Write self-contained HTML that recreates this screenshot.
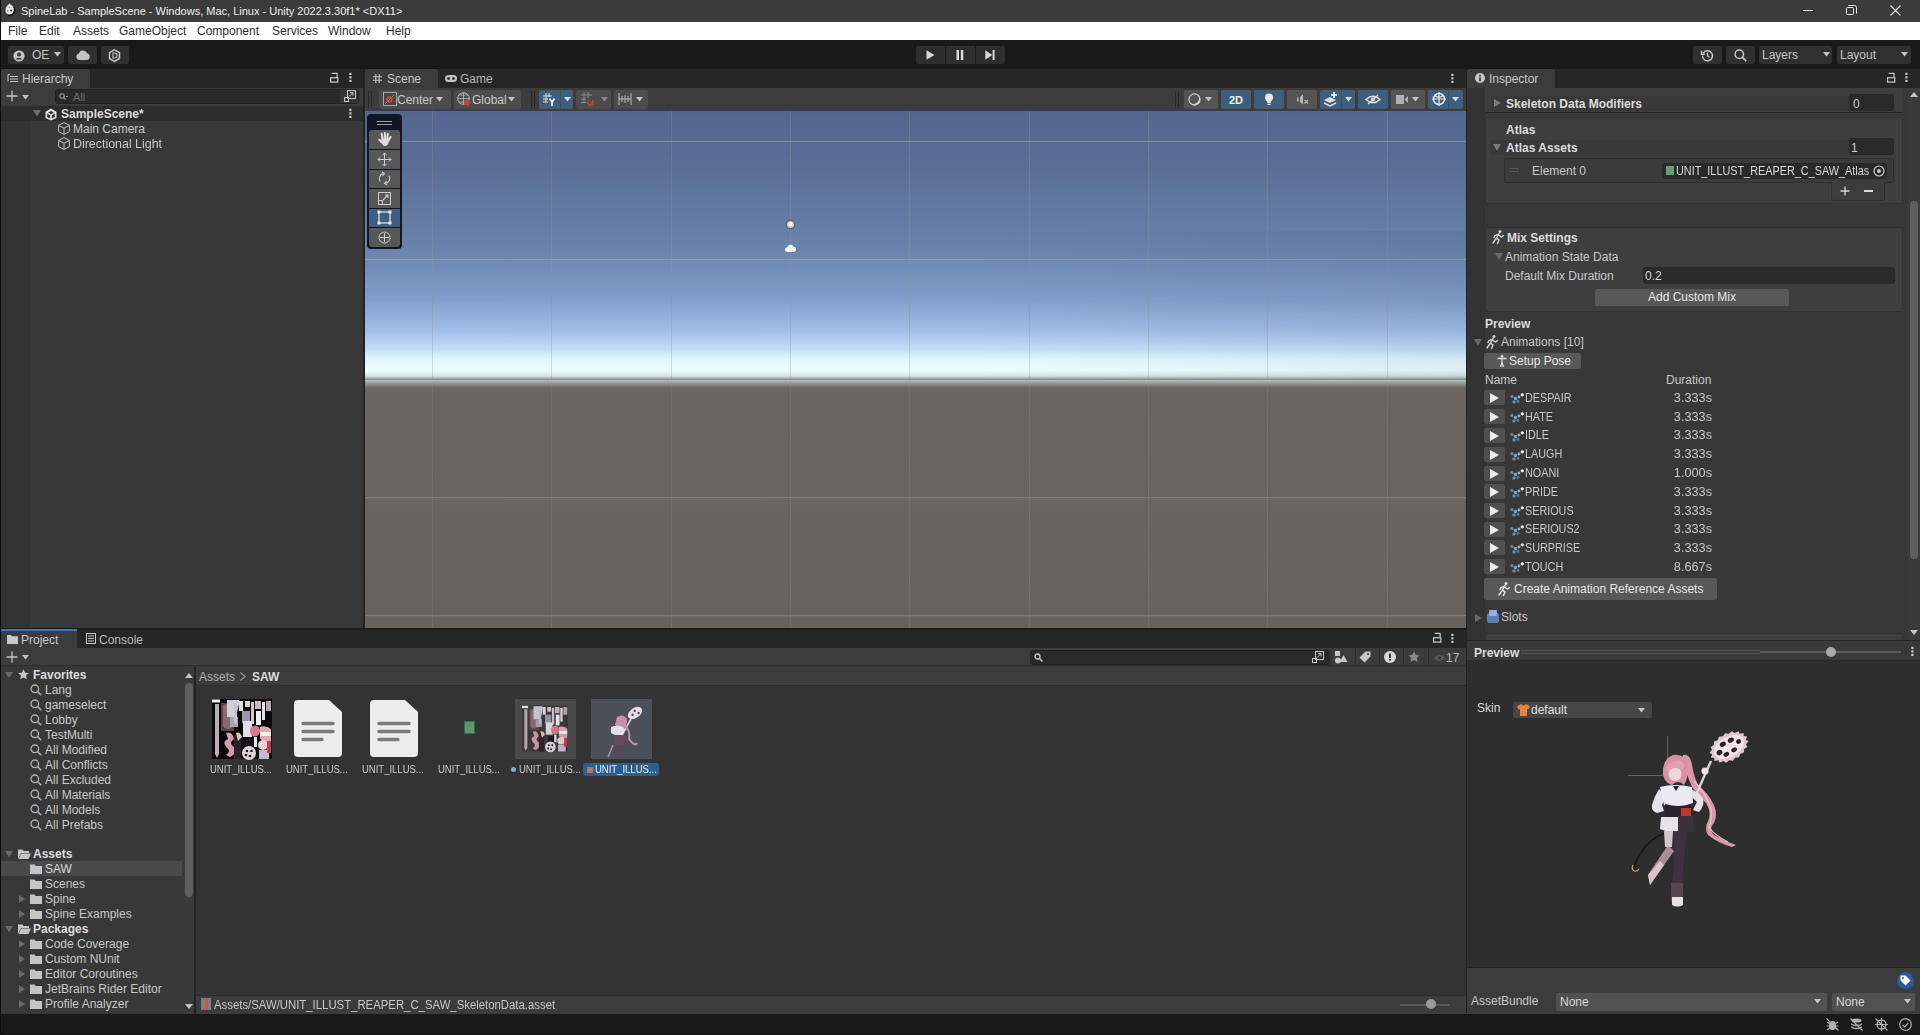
<!DOCTYPE html>
<html><head><meta charset="utf-8">
<style>
*{box-sizing:border-box;margin:0;padding:0}
html,body{width:1920px;height:1035px;overflow:hidden;background:#383838}
body{position:relative;font-family:"Liberation Sans",sans-serif;font-size:12px;color:#d2d2d2}
.a{position:absolute}
.t{position:absolute;white-space:nowrap;line-height:14px}
svg{position:absolute;overflow:visible}
/* title */
#title{left:0;top:0;width:1920px;height:22px;background:#3b3b3b}
#menu{left:0;top:22px;width:1920px;height:18px;background:#fff}
#menu .t{color:#2e2e2e;top:2px;font-size:12px}
#tb{left:0;top:40px;width:1920px;height:29px;background:#191919}
.tbb{position:absolute;top:6px;height:18px;background:#303030;border-radius:2px}
.tab{position:absolute;background:#3c3c3c;border-radius:3px 3px 0 0}
.tabbar{position:absolute;background:#262626}
.btn{position:absolute;background:#4c4c4c;border-radius:2px}
.blue{background:#3f5e7e}
</style></head><body>

<!-- ===== TITLE BAR ===== -->
<div id="title" class="a">
  <svg style="left:4px;top:3px" width="13" height="13" viewBox="0 0 13 13"><path d="M5.5 0.5L9 3.5Q10.5 6 9.5 9Q8 11.5 5.5 11.5Q2.5 11.5 1.5 8.5Q1 5 3 3z" fill="#e8e8e8"/><path d="M10 4Q12 8 9 11Q6.5 13 4 12.5" fill="none" stroke="#101010" stroke-width="1.3"/><circle cx="5.5" cy="4.5" r="0.8" fill="#888"/><circle cx="3.8" cy="7.6" r="0.9" fill="#888"/><circle cx="7.2" cy="7.6" r="1" fill="#222"/></svg>
  <div class="t" style="left:21px;top:4px;color:#f0f0f0;font-size:11px">SpineLab - SampleScene - Windows, Mac, Linux - Unity 2022.3.30f1* &lt;DX11&gt;</div>
  <div class="a" style="left:1803px;top:10px;width:10px;height:1px;background:#e8e8e8"></div>
  <svg style="left:1846px;top:5px" width="11" height="11" viewBox="0 0 11 11"><rect x="0.5" y="2.5" width="7" height="7" rx="1" fill="none" stroke="#e8e8e8"/><path d="M2.5 0.5h6a2 2 0 0 1 2 2v6" fill="none" stroke="#e8e8e8"/></svg>
  <svg style="left:1890px;top:5px" width="11" height="11" viewBox="0 0 11 11"><path d="M0.5 0.5L10.5 10.5M10.5 0.5L0.5 10.5" stroke="#e8e8e8" stroke-width="1.1"/></svg>
</div>

<!-- ===== MENU ===== -->
<div id="menu" class="a">
  <div class="t" style="left:8px">File</div>
  <div class="t" style="left:39px">Edit</div>
  <div class="t" style="left:73px">Assets</div>
  <div class="t" style="left:119px">GameObject</div>
  <div class="t" style="left:197px">Component</div>
  <div class="t" style="left:272px">Services</div>
  <div class="t" style="left:328px">Window</div>
  <div class="t" style="left:386px">Help</div>
</div>

<!-- ===== MAIN TOOLBAR ===== -->
<div id="tb" class="a">
  <div class="tbb" style="left:8px;width:56px"></div>
  <svg style="left:13px;top:10px" width="12" height="12" viewBox="0 0 12 12"><circle cx="6" cy="6" r="5.6" fill="#c4c4c4"/><circle cx="6" cy="4.4" r="2" fill="#383838"/><path d="M2.6 9.6a3.6 2.6 0 0 1 6.8 0" fill="#383838"/></svg>
  <div class="t" style="left:32px;top:8px;color:#c4c4c4">OE</div>
  <svg style="left:54px;top:12px" width="7" height="5" viewBox="0 0 7 5"><path d="M0 0h7L3.5 4.5z" fill="#c4c4c4"/></svg>
  <div class="tbb" style="left:68px;width:29px"></div>
  <svg style="left:76px;top:10px" width="14" height="10" viewBox="0 0 14 10"><path d="M3.5 10a3.3 3.3 0 0 1-.6-6.5A4.3 4.3 0 0 1 11 3.3 3.4 3.4 0 0 1 10.8 10z" fill="#c4c4c4"/></svg>
  <div class="tbb" style="left:101px;width:28px"></div>
  <svg style="left:108px;top:9px" width="13" height="13" viewBox="0 0 13 13"><path d="M6.5 0.8l5 2.9v5.8l-5 2.9-5-2.9V3.7z" fill="none" stroke="#c4c4c4" stroke-width="1.5"/><path d="M5 4h1.6a2.5 2.5 0 0 1 0 5H5z" fill="none" stroke="#c4c4c4" stroke-width="1.1"/></svg>
  <div class="tbb" style="left:916px;width:89px;background:#2e2e2e"></div>
  <div class="a" style="left:945px;top:6px;width:1px;height:18px;background:#1c1c1c"></div>
  <div class="a" style="left:975px;top:6px;width:1px;height:18px;background:#1c1c1c"></div>
  <svg style="left:926px;top:10px" width="9" height="10" viewBox="0 0 9 10"><path d="M0.5 0.3L8.5 5 0.5 9.7z" fill="#d8d8d8"/></svg>
  <svg style="left:956px;top:10px" width="8" height="10" viewBox="0 0 8 10"><rect x="0.5" y="0" width="2.5" height="10" rx="0.5" fill="#d8d8d8"/><rect x="4.8" y="0" width="2.5" height="10" rx="0.5" fill="#d8d8d8"/></svg>
  <svg style="left:985px;top:10px" width="10" height="10" viewBox="0 0 10 10"><path d="M0.3 0.3L7.3 5 0.3 9.7z" fill="#d8d8d8"/><rect x="7.6" y="0" width="2" height="10" fill="#d8d8d8"/></svg>
  <div class="tbb" style="left:1693px;width:29px"></div>
  <svg style="left:1701px;top:9px" width="13" height="13" viewBox="0 0 13 13"><path d="M2.2 4.2A5 5 0 1 1 1.5 6.5" fill="none" stroke="#c4c4c4" stroke-width="1.5"/><path d="M0.5 1.8v3.5H4" fill="none" stroke="#c4c4c4" stroke-width="1.4"/><path d="M6.5 3.5v3.3l2 1.4" fill="none" stroke="#c4c4c4" stroke-width="1.4"/></svg>
  <div class="tbb" style="left:1726px;width:29px"></div>
  <svg style="left:1734px;top:9px" width="13" height="13" viewBox="0 0 13 13"><circle cx="5.3" cy="5.3" r="4.2" fill="none" stroke="#c4c4c4" stroke-width="1.5"/><path d="M8.4 8.4l3.8 3.8" stroke="#c4c4c4" stroke-width="1.8"/></svg>
  <div class="tbb" style="left:1759px;width:73px"></div>
  <div class="t" style="left:1762px;top:8px;color:#c4c4c4">Layers</div>
  <svg style="left:1823px;top:12px" width="7" height="5" viewBox="0 0 7 5"><path d="M0 0h7L3.5 4.5z" fill="#c4c4c4"/></svg>
  <div class="tbb" style="left:1837px;width:74px"></div>
  <div class="t" style="left:1840px;top:8px;color:#c4c4c4">Layout</div>
  <svg style="left:1901px;top:12px" width="7" height="5" viewBox="0 0 7 5"><path d="M0 0h7L3.5 4.5z" fill="#c4c4c4"/></svg>
</div>

<!-- ===== HIERARCHY ===== -->
<div class="tabbar" style="left:0;top:69px;width:363px;height:19px"></div>
<div class="tab" style="left:0;top:69px;width:90px;height:19px"></div>
<svg style="left:7px;top:74px" width="11" height="9" viewBox="0 0 11 9"><path d="M1 0.5h2M3 2.5h8M3 5h8M3 7.5h8M1 0.5v7" stroke="#c4c4c4" stroke-width="1"/></svg>
<div class="t" style="left:22px;top:72px;color:#c8c8c8">Hierarchy</div>
<svg style="left:329px;top:72px" width="10" height="11" viewBox="0 0 10 11"><path d="M2.8 1.3H8.1V5.6" fill="none" stroke="#c8c8c8" stroke-width="1.2"/><rect x="1.6" y="5.7" width="7.2" height="4.4" fill="none" stroke="#c8c8c8" stroke-width="1.2"/></svg>
<svg style="left:349px;top:72px" width="3" height="11" viewBox="0 0 3 11"><rect x="0.3" y="0.8" width="2.2" height="2.2" fill="#c8c8c8"/><rect x="0.3" y="4.3" width="2.2" height="2.2" fill="#c8c8c8"/><rect x="0.3" y="7.8" width="2.2" height="2.2" fill="#c8c8c8"/></svg>
<div class="a" style="left:0;top:88px;width:363px;height:539px;background:#383838"></div>
<div class="a" style="left:0;top:88px;width:363px;height:17px;background:#3c3c3c"></div>
<svg style="left:6px;top:90px" width="12" height="12" viewBox="0 0 12 12"><path d="M6 0.5v11M0.5 6h11" stroke="#c4c4c4" stroke-width="1.3"/></svg>
<svg style="left:22px;top:95px" width="7" height="5" viewBox="0 0 7 5"><path d="M0 0h7L3.5 4.5z" fill="#c4c4c4"/></svg>
<div class="a" style="left:55px;top:89px;width:304px;height:15px;background:#2a2a2a;border:1px solid #212121;border-radius:3px"></div>
<svg style="left:59px;top:93px" width="9" height="8" viewBox="0 0 9 8"><circle cx="3" cy="3" r="2.2" fill="none" stroke="#9a9a9a" stroke-width="1.1"/><path d="M4.5 4.5l2 2M7 3.5h2" stroke="#9a9a9a" stroke-width="1.1"/></svg>
<div class="t" style="left:73px;top:90px;color:#6e6e6e;font-size:11px">All</div>
<div class="a" style="left:340px;top:90px;width:18px;height:13px;background:#353535"></div>
<svg style="left:344px;top:90px" width="12" height="12" viewBox="0 0 12 12"><rect x="3.5" y="0.5" width="8" height="8" fill="none" stroke="#c4c4c4"/><rect x="0.5" y="7.5" width="4" height="4" fill="none" stroke="#c4c4c4"/><path d="M5 6.5L9 2.5M6 2.5h3v3" fill="none" stroke="#c4c4c4"/></svg>
<div class="a" style="left:1px;top:121px;width:29px;height:506px;background:#333333"></div>
<div class="a" style="left:0;top:88px;width:1px;height:540px;background:#232323"></div>
<div class="a" style="left:0;top:106px;width:363px;height:15px;background:#2d2d2d"></div>
<svg style="left:33px;top:110px" width="8" height="7" viewBox="0 0 8 7"><path d="M0 0h8L4 6.5z" fill="#6e6e6e"/></svg>
<svg style="left:45px;top:108px" width="12" height="13" viewBox="0 0 12 13"><path d="M6 0.5l5.5 3.2v6.2L6 12.6 0.5 9.9V3.7z" fill="#e0e0e0"/><path d="M3.2 4.6L6 6.2 8.8 4.6 6 3zM2.2 5.6v3.3l2.9 1.6V7.2zM9.8 5.6v3.3L6.9 10.5V7.2z" fill="#2d2d2d"/></svg>
<div class="t" style="left:61px;top:107px;color:#dcdcdc;font-weight:bold">SampleScene*</div>
<svg style="left:349px;top:108px" width="3" height="11" viewBox="0 0 3 11"><rect x="0.3" y="0.8" width="2.2" height="2.2" fill="#c8c8c8"/><rect x="0.3" y="4.3" width="2.2" height="2.2" fill="#c8c8c8"/><rect x="0.3" y="7.8" width="2.2" height="2.2" fill="#c8c8c8"/></svg>
<svg style="left:58px;top:122px" width="12" height="13" viewBox="0 0 12 13"><path d="M6 0.6l5.4 2.8v6.2L6 12.4 0.6 9.6V3.4zM0.6 3.4L6 6.2l5.4-2.8M6 6.2v6.2" fill="none" stroke="#bdbdbd" stroke-width="1"/></svg>
<div class="t" style="left:73px;top:122px;color:#c8c8c8">Main Camera</div>
<svg style="left:58px;top:137px" width="12" height="13" viewBox="0 0 12 13"><path d="M6 0.6l5.4 2.8v6.2L6 12.4 0.6 9.6V3.4zM0.6 3.4L6 6.2l5.4-2.8M6 6.2v6.2" fill="none" stroke="#bdbdbd" stroke-width="1"/></svg>
<div class="t" style="left:73px;top:137px;color:#c8c8c8;transform:scaleX(1.035);transform-origin:0 0">Directional Light</div>
<div class="a" style="left:363px;top:69px;width:2px;height:560px;background:#232323"></div>

<!-- ===== SCENE ===== -->
<div class="tabbar" style="left:365px;top:69px;width:1101px;height:19px"></div>
<div class="tab" style="left:365px;top:69px;width:73px;height:19px"></div>
<svg style="left:373px;top:74px" width="9" height="9" viewBox="0 0 9 9"><path d="M2.8 0v9M6.2 0v9M0 2.8h9M0 6.2h9" stroke="#c4c4c4" stroke-width="1.1"/></svg>
<div class="t" style="left:387px;top:72px;color:#c8c8c8">Scene</div>
<svg style="left:445px;top:75px" width="12" height="7" viewBox="0 0 12 7"><rect x="0" y="0" width="12" height="7" rx="3.5" fill="#c4c4c4"/><circle cx="3.5" cy="3.5" r="1.4" fill="#282828"/><circle cx="8.5" cy="3.5" r="1.4" fill="#282828"/></svg>
<div class="t" style="left:460px;top:72px;color:#b8b8b8">Game</div>
<svg style="left:1451px;top:73px" width="3" height="11" viewBox="0 0 3 11"><rect x="0.3" y="0.8" width="2.2" height="2.2" fill="#c8c8c8"/><rect x="0.3" y="4.3" width="2.2" height="2.2" fill="#c8c8c8"/><rect x="0.3" y="7.8" width="2.2" height="2.2" fill="#c8c8c8"/></svg>
<div class="a" style="left:365px;top:88px;width:1101px;height:23px;background:#3c3c3c"></div>
<div class="a" style="left:368px;top:91px;width:1px;height:17px;background:#2a2a2a"></div><div class="a" style="left:371px;top:91px;width:1px;height:17px;background:#2a2a2a"></div>
<div class="btn" style="left:379px;top:90px;width:72px;height:19px"></div>
<svg style="left:383px;top:92px" width="14" height="14" viewBox="0 0 14 14"><rect x="0.5" y="0.5" width="13" height="13" fill="#4a4646" stroke="#a8a8a8"/><path d="M2.5 11.5L11.5 2.5" stroke="#a89090" stroke-width="1"/><circle cx="6.5" cy="7.5" r="2.4" fill="none" stroke="#d04636" stroke-width="1.6"/></svg>
<div class="t" style="left:397px;top:93px;color:#c8c8c8">Center</div>
<svg style="left:436px;top:97px" width="7" height="5" viewBox="0 0 7 5"><path d="M0 0h7L3.5 4.5z" fill="#c4c4c4"/></svg>
<div class="btn" style="left:454px;top:90px;width:67px;height:19px"></div>
<svg style="left:457px;top:92px" width="14" height="14" viewBox="0 0 14 14"><circle cx="6.5" cy="6.5" r="5.8" fill="none" stroke="#b8b8b8" stroke-width="1"/><path d="M0.7 6.5h11.6M6.5 0.7v11.6M2 3h9M2 10h9" stroke="#b8b8b8" stroke-width="0.8"/><circle cx="10" cy="10.5" r="3" fill="#c8442c"/></svg>
<div class="t" style="left:472px;top:93px;color:#c8c8c8">Global</div>
<svg style="left:508px;top:97px" width="7" height="5" viewBox="0 0 7 5"><path d="M0 0h7L3.5 4.5z" fill="#c4c4c4"/></svg>
<div class="a" style="left:531px;top:91px;width:1px;height:17px;background:#2a2a2a"></div><div class="a" style="left:534px;top:91px;width:1px;height:17px;background:#2a2a2a"></div>
<div class="btn blue" style="left:539px;top:90px;width:34px;height:19px"></div>
<div class="a" style="left:560px;top:90px;width:1px;height:19px;background:#3a5068"></div>
<svg style="left:543px;top:93px" width="13" height="13" viewBox="0 0 13 13"><path d="M3 0v9M6 0v4M0 3h9M0 6h5M0 9h5" stroke="#e0e0e0" stroke-width="1"/><path d="M6.5 5.5l2.5 3.5 2.5-3.5M9 9v4" stroke="#ffffff" stroke-width="1.6" fill="none"/></svg>
<svg style="left:564px;top:97px" width="7" height="5" viewBox="0 0 7 5"><path d="M0 0h7L3.5 4.5z" fill="#d8d8d8"/></svg>
<div class="btn" style="left:576px;top:90px;width:35px;height:19px"></div>
<svg style="left:581px;top:92px" width="14" height="14" viewBox="0 0 14 14"><path d="M3 0v11M7 0v6M0 3h11M0 7h5M0 10.5h5" stroke="#909090" stroke-width="0.9"/><path d="M7 9.5a2.5 2.5 0 1 0 4 -1" stroke="#c8442c" stroke-width="1.8" fill="none"/></svg>
<svg style="left:601px;top:97px" width="7" height="5" viewBox="0 0 7 5"><path d="M0 0h7L3.5 4.5z" fill="#8a8a8a"/></svg>
<div class="btn" style="left:614px;top:90px;width:34px;height:19px"></div>
<svg style="left:618px;top:93px" width="14" height="12" viewBox="0 0 14 12"><path d="M1 0v12M13 0v12M1 6h12M4 3v6M7 2v8M10 3v6" stroke="#b8b8b8" stroke-width="1"/></svg>
<svg style="left:636px;top:97px" width="7" height="5" viewBox="0 0 7 5"><path d="M0 0h7L3.5 4.5z" fill="#c4c4c4"/></svg>
<div class="a" style="left:1175px;top:91px;width:1px;height:17px;background:#2a2a2a"></div><div class="a" style="left:1178px;top:91px;width:1px;height:17px;background:#2a2a2a"></div>
<div class="btn" style="left:1184px;top:90px;width:34px;height:19px;background:#545454"></div>
<svg style="left:1188px;top:93px" width="13" height="13" viewBox="0 0 13 13"><circle cx="6.5" cy="6.5" r="5.6" fill="none" stroke="#d0d0d0" stroke-width="1.1"/><path d="M10.5 2.5A5.6 5.6 0 0 1 2.5 10.5Q7 12 9.5 9Q12 6 10.5 2.5z" fill="#d0d0d0"/></svg>
<svg style="left:1205px;top:97px" width="7" height="5" viewBox="0 0 7 5"><path d="M0 0h7L3.5 4.5z" fill="#c4c4c4"/></svg>
<div class="btn blue" style="left:1221px;top:90px;width:30px;height:19px"></div>
<div class="t" style="left:1229px;top:93px;color:#f0f0f0;font-size:11px;font-weight:bold">2D</div>
<div class="btn blue" style="left:1254px;top:90px;width:30px;height:19px"></div>
<svg style="left:1264px;top:93px" width="10" height="13" viewBox="0 0 10 13"><circle cx="5" cy="4.5" r="4" fill="#e8e8e8"/><rect x="3.2" y="7" width="3.6" height="3" fill="#e8e8e8"/><rect x="3.5" y="10.6" width="3" height="1.4" fill="#e8e8e8"/></svg>
<div class="btn" style="left:1287px;top:90px;width:30px;height:19px;background:#545454"></div>
<svg style="left:1297px;top:94px" width="12" height="11" viewBox="0 0 12 11"><path d="M0 3.5h1.5v4H0z" fill="#b8b8b8"/><path d="M3 3l3-2.5v10L3 8z" fill="#b8b8b8"/><path d="M7.5 6l3.5 3.5M11 6l-3.5 3.5" stroke="#b8b8b8" stroke-width="1.1"/></svg>
<div class="btn blue" style="left:1320px;top:90px;width:35px;height:19px"></div>
<div class="a" style="left:1341px;top:90px;width:1px;height:19px;background:#3a5068"></div>
<svg style="left:1324px;top:92px" width="14" height="14" viewBox="0 0 14 14"><path d="M0 8l6-3 6 3-6 3z" fill="#e0e0e0"/><path d="M0 11l6 3 6-3" fill="none" stroke="#e0e0e0" stroke-width="1.4"/><path d="M10 0v6M7 3h6" stroke="#ffffff" stroke-width="1.6"/></svg>
<svg style="left:1345px;top:97px" width="7" height="5" viewBox="0 0 7 5"><path d="M0 0h7L3.5 4.5z" fill="#d8d8d8"/></svg>
<div class="btn blue" style="left:1358px;top:90px;width:30px;height:19px"></div>
<svg style="left:1365px;top:94px" width="16" height="11" viewBox="0 0 16 11"><path d="M1 5.5Q8 -1 15 5.5Q8 12 1 5.5z" fill="none" stroke="#e0e0e0" stroke-width="1.4"/><circle cx="8" cy="5.5" r="2" fill="#e0e0e0"/><path d="M3 10L13 1" stroke="#e0e0e0" stroke-width="1.4"/></svg>
<div class="btn" style="left:1391px;top:90px;width:34px;height:19px;background:#545454"></div>
<svg style="left:1396px;top:95px" width="12" height="9" viewBox="0 0 12 9"><rect x="0" y="0" width="8" height="9" fill="#b0b0b0"/><path d="M8.5 4.5L12 1v7z" fill="#b0b0b0"/></svg>
<svg style="left:1412px;top:97px" width="7" height="5" viewBox="0 0 7 5"><path d="M0 0h7L3.5 4.5z" fill="#c4c4c4"/></svg>
<div class="btn blue" style="left:1428px;top:90px;width:35px;height:19px"></div>
<div class="a" style="left:1448px;top:90px;width:1px;height:19px;background:#3a5068"></div>
<svg style="left:1432px;top:92px" width="14" height="14" viewBox="0 0 14 14"><circle cx="7" cy="7" r="5.5" fill="none" stroke="#e8e8e8" stroke-width="1.5"/><path d="M7 0v14M0 7h14M3 3.5Q7 7 11 3.5" fill="none" stroke="#e8e8e8" stroke-width="1.2"/></svg>
<svg style="left:1452px;top:97px" width="7" height="5" viewBox="0 0 7 5"><path d="M0 0h7L3.5 4.5z" fill="#d8d8d8"/></svg>
<div id="scene" class="a" style="left:365px;top:111px;width:1101px;height:517px;overflow:hidden;background:linear-gradient(#526690 0px,#5a6f96 60px,#6a84ad 140px,#819fcc 189px,#9fbde6 219px,#c4e0f8 239px,#e2f6ff 248px,#f0fcff 259px,#d8e4e6 265px,#a0acac 267.5px,#889494 268.5px,#b4bcbc 269.5px,#8c8e8e 273px,#6a6562 277px,#68625d 517px)">
<div class="a" style="left:0;top:30px;width:1101px;height:1px;background:rgba(165,170,175,0.33)"></div><div class="a" style="left:0;top:148px;width:1101px;height:1px;background:rgba(165,170,175,0.33)"></div><div class="a" style="left:0;top:386px;width:1101px;height:1px;background:rgba(165,170,175,0.33)"></div><div class="a" style="left:0;top:504px;width:1101px;height:1px;background:rgba(165,170,175,0.33)"></div>
<div class="a" style="left:67px;top:0;width:1px;height:268px;background:rgba(145,148,150,0.33)"></div><div class="a" style="left:67px;top:270px;width:1px;height:247px;background:rgba(150,150,150,0.2)"></div><div class="a" style="left:186px;top:0;width:1px;height:268px;background:rgba(145,148,150,0.33)"></div><div class="a" style="left:186px;top:270px;width:1px;height:247px;background:rgba(150,150,150,0.2)"></div><div class="a" style="left:306px;top:0;width:1px;height:268px;background:rgba(145,148,150,0.33)"></div><div class="a" style="left:306px;top:270px;width:1px;height:247px;background:rgba(150,150,150,0.2)"></div><div class="a" style="left:425px;top:0;width:1px;height:268px;background:rgba(145,148,150,0.33)"></div><div class="a" style="left:425px;top:270px;width:1px;height:247px;background:rgba(150,150,150,0.2)"></div><div class="a" style="left:544px;top:0;width:1px;height:268px;background:rgba(145,148,150,0.33)"></div><div class="a" style="left:544px;top:270px;width:1px;height:247px;background:rgba(150,150,150,0.2)"></div><div class="a" style="left:664px;top:0;width:1px;height:268px;background:rgba(145,148,150,0.33)"></div><div class="a" style="left:664px;top:270px;width:1px;height:247px;background:rgba(150,150,150,0.2)"></div><div class="a" style="left:783px;top:0;width:1px;height:268px;background:rgba(145,148,150,0.33)"></div><div class="a" style="left:783px;top:270px;width:1px;height:247px;background:rgba(150,150,150,0.2)"></div><div class="a" style="left:902px;top:0;width:1px;height:268px;background:rgba(145,148,150,0.33)"></div><div class="a" style="left:902px;top:270px;width:1px;height:247px;background:rgba(150,150,150,0.2)"></div><div class="a" style="left:1022px;top:0;width:1px;height:268px;background:rgba(145,148,150,0.33)"></div><div class="a" style="left:1022px;top:270px;width:1px;height:247px;background:rgba(150,150,150,0.2)"></div><div class="a" style="left:0;top:30px;width:1101px;height:1px;background:rgba(165,170,175,0.33)"></div><div class="a" style="left:0;top:148px;width:1101px;height:1px;background:rgba(165,170,175,0.33)"></div><div class="a" style="left:0;top:387px;width:1101px;height:2px;background:rgba(140,140,135,0.13)"></div><div class="a" style="left:0;top:504px;width:1101px;height:2px;background:rgba(140,140,135,0.13)"></div>
<div class="a" style="left:0;top:120px;width:1101px;height:149px;background:linear-gradient(to right,rgba(30,50,70,0) 55%,rgba(30,50,70,0.07) 100%)"></div>
<div class="a" style="left:2px;top:3px;width:35px;height:135px;background:#101722;border-radius:4px"></div>
<div class="a" style="left:12px;top:10px;width:15px;height:1px;background:#9aa0a8"></div><div class="a" style="left:12px;top:13px;width:15px;height:1px;background:#9aa0a8"></div>
<div class="a" style="left:4px;top:19px;width:31px;height:19px;background:#575757;border-radius:3px 3px 0 0"></div>
<div class="a" style="left:4px;top:39px;width:31px;height:19px;background:#575757"></div>
<div class="a" style="left:4px;top:59px;width:31px;height:18px;background:#575757"></div>
<div class="a" style="left:4px;top:78px;width:31px;height:19px;background:#575757"></div>
<div class="a" style="left:4px;top:98px;width:31px;height:18px;background:#3d5e80"></div>
<div class="a" style="left:4px;top:117px;width:31px;height:19px;background:#575757;border-radius:0 0 3px 3px"></div>
<svg style="left:13px;top:21px" width="14" height="15" viewBox="0 0 14 15"><g stroke="#dcdcdc" stroke-linecap="round" fill="none"><path d="M3.6 1.8L4.6 7M6.8 1L7 7M9.8 1.8L9.2 7M12.6 4.8L10.6 8.5" stroke-width="2.1"/><path d="M1.3 7.8L4 10.5" stroke-width="2.2"/></g><path d="M3.4 6.5H11L10.5 11Q9.5 14 7 14Q4.8 14 4 11.5z" fill="#dcdcdc"/></svg>
<svg style="left:12px;top:41px" width="15" height="15" viewBox="0 0 15 15"><path d="M7.5 1v13M1 7.5h13M5.5 3l2-2 2 2M5.5 12l2 2 2-2M3 5.5l-2 2 2 2M12 5.5l2 2-2 2" fill="none" stroke="#cfcfcf" stroke-width="1"/></svg>
<svg style="left:12px;top:60px" width="15" height="15" viewBox="0 0 15 15"><path d="M3.2 10.5A5 5 0 0 1 6.5 2.6M11.8 4.5A5 5 0 0 1 8.5 12.4" fill="none" stroke="#cfcfcf" stroke-width="1.1"/><path d="M5 1l2.5 1.6L5.5 5M10 14l-2.5-1.6L9.5 10" fill="none" stroke="#cfcfcf" stroke-width="1.1"/></svg>
<svg style="left:12px;top:80px" width="15" height="15" viewBox="0 0 15 15"><rect x="1.5" y="1.5" width="12" height="12" fill="none" stroke="#cfcfcf" stroke-width="1"/><rect x="1.5" y="9.5" width="4" height="4" fill="none" stroke="#cfcfcf" stroke-width="1"/><path d="M6 9l5-5M8 4h3v3" fill="none" stroke="#cfcfcf" stroke-width="1.1"/></svg>
<svg style="left:12px;top:99px" width="15" height="15" viewBox="0 0 15 15"><rect x="2" y="2" width="11" height="11" fill="none" stroke="#e8e8e8" stroke-width="1.2"/><rect x="0.5" y="0.5" width="3" height="3" fill="#e8e8e8"/><rect x="11.5" y="0.5" width="3" height="3" fill="#e8e8e8"/><rect x="0.5" y="11.5" width="3" height="3" fill="#e8e8e8"/><rect x="11.5" y="11.5" width="3" height="3" fill="#e8e8e8"/></svg>
<svg style="left:12px;top:119px" width="15" height="15" viewBox="0 0 15 15"><circle cx="7.5" cy="7.5" r="5.5" fill="none" stroke="#cfcfcf" stroke-width="1"/><path d="M7.5 3v9M3 7.5h9" stroke="#cfcfcf" stroke-width="1"/></svg>
<svg style="left:420px;top:108px" width="11" height="11" viewBox="0 0 11 11"><circle cx="5.5" cy="5.5" r="5" fill="#40506a" opacity="0.5"/><circle cx="5.5" cy="5.5" r="3.6" fill="#c8ccb8"/><circle cx="5.5" cy="5" r="2.2" fill="#f6f6e0"/></svg>
<svg style="left:420px;top:133px" width="11" height="8" viewBox="0 0 11 8"><path d="M2.5 8a2.4 2.4 0 0 1-.3-4.8A3.2 3.2 0 0 1 8.3 2.6 2.7 2.7 0 0 1 8.4 8z" fill="#f4f4f4"/></svg>
</div>
<div class="a" style="left:1466px;top:69px;width:1px;height:944px;background:#232323"></div>

<!-- ===== INSPECTOR ===== -->
<div class="tabbar" style="left:1467px;top:69px;width:453px;height:19px"></div>
<div class="tab" style="left:1467px;top:69px;width:88px;height:19px"></div>
<svg style="left:1475px;top:73px" width="10" height="10" viewBox="0 0 10 10"><circle cx="5" cy="5" r="5" fill="#c8c8c8"/><rect x="4.1" y="4.2" width="1.8" height="4" fill="#3c3c3c"/><circle cx="5" cy="2.6" r="1" fill="#3c3c3c"/></svg>
<div class="t" style="left:1489px;top:72px;color:#c8c8c8">Inspector</div>
<svg style="left:1886px;top:72px" width="10" height="11" viewBox="0 0 10 11"><path d="M2.8 1.3H8.1V5.6" fill="none" stroke="#c8c8c8" stroke-width="1.2"/><rect x="1.6" y="5.7" width="7.2" height="4.4" fill="none" stroke="#c8c8c8" stroke-width="1.2"/></svg>
<svg style="left:1905px;top:72px" width="3" height="11" viewBox="0 0 3 11"><rect x="0.3" y="0.8" width="2.2" height="2.2" fill="#c8c8c8"/><rect x="0.3" y="4.3" width="2.2" height="2.2" fill="#c8c8c8"/><rect x="0.3" y="7.8" width="2.2" height="2.2" fill="#c8c8c8"/></svg>
<div class="a" style="left:1467px;top:88px;width:453px;height:552px;background:#383838"></div>
<div class="a" style="left:1467px;top:88px;width:18px;height:552px;background:#333333"></div>
<!-- scrollbar -->
<div class="a" style="left:1908px;top:88px;width:12px;height:552px;background:#3a3a3a"></div>
<svg style="left:1910px;top:92px" width="8" height="5" viewBox="0 0 8 5"><path d="M0 5L4 0 8 5z" fill="#c4c4c4"/></svg>
<div class="a" style="left:1910px;top:201px;width:8px;height:358px;background:#5e5e5e;border-radius:4px"></div>
<svg style="left:1910px;top:630px" width="8" height="5" viewBox="0 0 8 5"><path d="M0 0L8 0 4 5z" fill="#c4c4c4"/></svg>
<!-- skeleton data modifiers -->
<div class="a" style="left:1485px;top:88px;width:418px;height:25px;background:#3e3e3e;border-bottom:1px solid #2a2a2a"></div>
<div class="a" style="left:1491px;top:96px;width:358px;height:15px;background:#393939"></div>
<svg style="left:1494px;top:99px" width="7" height="8" viewBox="0 0 7 8"><path d="M0 0L7 4 0 8z" fill="#7a7a7a"/></svg>
<div class="t" style="left:1506px;top:97px;color:#dcdcdc;font-weight:bold">Skeleton Data Modifiers</div>
<div class="a" style="left:1849px;top:94px;width:45px;height:17px;background:#2a2a2a;border-radius:3px"></div>
<div class="t" style="left:1853px;top:97px;color:#c8c8c8">0</div>
<!-- atlas -->
<div class="a" style="left:1485px;top:117px;width:418px;height:87px;background:#3e3e3e;border:1px solid #333;border-radius:2px"></div>
<div class="t" style="left:1506px;top:123px;color:#dcdcdc;font-weight:bold">Atlas</div>
<div class="a" style="left:1491px;top:140px;width:358px;height:15px;background:#393939"></div>
<svg style="left:1493px;top:144px" width="8" height="7" viewBox="0 0 8 7"><path d="M0 0h8L4 7z" fill="#7a7a7a"/></svg>
<div class="t" style="left:1506px;top:141px;color:#dcdcdc;font-weight:bold">Atlas Assets</div>
<div class="a" style="left:1849px;top:138px;width:45px;height:17px;background:#2a2a2a;border-radius:3px"></div>
<div class="t" style="left:1851px;top:141px;color:#c8c8c8">1</div>
<div class="a" style="left:1504px;top:158px;width:390px;height:25px;background:#3b3b3b;border:1px solid #2f2f2f;border-radius:3px"></div>
<div class="a" style="left:1510px;top:168px;width:9px;height:1px;background:#555"></div><div class="a" style="left:1510px;top:171px;width:9px;height:1px;background:#555"></div>
<div class="t" style="left:1532px;top:164px;color:#c8c8c8">Element 0</div>
<div class="a" style="left:1662px;top:163px;width:225px;height:16px;background:#2a2a2a;border-radius:3px"></div>
<div class="a" style="left:1666px;top:166px;width:8px;height:9px;background:#5fa07a"></div>
<div class="t" style="left:1676px;top:164px;color:#d8d8d8;transform:scaleX(0.904);transform-origin:0 0">UNIT_ILLUST_REAPER_C_SAW_Atlas</div>
<svg style="left:1873px;top:165px" width="12" height="12" viewBox="0 0 12 12"><circle cx="6" cy="6" r="5" fill="none" stroke="#c8c8c8" stroke-width="1.2"/><circle cx="6" cy="6" r="2" fill="#c8c8c8"/></svg>
<div class="a" style="left:1831px;top:182px;width:54px;height:19px;background:#3c3c3c;border:1px solid #2f2f2f;border-top:none;border-radius:0 0 3px 3px"></div>
<svg style="left:1840px;top:186px" width="10" height="10" viewBox="0 0 10 10"><path d="M5 0.5v9M0.5 5h9" stroke="#d8d8d8" stroke-width="1.3"/></svg>
<div class="a" style="left:1864px;top:190px;width:9px;height:1.5px;background:#d8d8d8"></div>
<!-- mix settings -->
<div class="a" style="left:1485px;top:227px;width:418px;height:85px;background:#3e3e3e;border:1px solid #333;border-radius:2px"></div>
<svg style="left:1492px;top:230px" width="12" height="14" viewBox="0 0 12 14"><circle cx="8" cy="1.6" r="1.5" fill="#d0d0d0"/><path d="M7 3.5L4.5 8 7 10 5.5 13.5M4.5 8L1 13M6 4.5L9.5 7 11.5 5.5M6 4.5L3 5.5 2 7.5" fill="none" stroke="#d0d0d0" stroke-width="1.5" stroke-linecap="round"/></svg>
<div class="t" style="left:1507px;top:231px;color:#dcdcdc;font-weight:bold">Mix Settings</div>
<svg style="left:1495px;top:253px" width="8" height="7" viewBox="0 0 8 7"><path d="M0 0h8L4 7z" fill="#6a6a6a"/></svg>
<div class="t" style="left:1505px;top:250px;color:#c8c8c8">Animation State Data</div>
<div class="t" style="left:1505px;top:269px;color:#c8c8c8">Default Mix Duration</div>
<div class="a" style="left:1643px;top:267px;width:252px;height:17px;background:#2a2a2a;border-radius:3px"></div>
<div class="t" style="left:1645px;top:269px;color:#d8d8d8">0.2</div>
<div class="btn" style="left:1595px;top:289px;width:194px;height:17px;background:#585858"></div>
<div class="t" style="left:1595px;width:194px;text-align:center;top:290px;color:#e8e8e8">Add Custom Mix</div>
<!-- preview section -->
<div class="t" style="left:1485px;top:317px;color:#dcdcdc;font-weight:bold">Preview</div>
<svg style="left:1474px;top:339px" width="8" height="7" viewBox="0 0 8 7"><path d="M0 0h8L4 7z" fill="#6a6a6a"/></svg>
<svg style="left:1486px;top:335px" width="12" height="14" viewBox="0 0 12 14"><circle cx="8" cy="1.6" r="1.5" fill="#d0d0d0"/><path d="M7 3.5L4.5 8 7 10 5.5 13.5M4.5 8L1 13M6 4.5L9.5 7 11.5 5.5M6 4.5L3 5.5 2 7.5" fill="none" stroke="#d0d0d0" stroke-width="1.5" stroke-linecap="round"/></svg>
<div class="t" style="left:1501px;top:335px;color:#c8c8c8">Animations [10]</div>
<div class="btn" style="left:1484px;top:353px;width:97px;height:16px;background:#585858"></div>
<svg style="left:1497px;top:355px" width="10" height="12" viewBox="0 0 10 12"><circle cx="5" cy="1.3" r="1.3" fill="#e0e0e0"/><path d="M0.5 3.5h9M5 3v4.5M5 7.5L3.5 12M5 7.5L6.5 12" fill="none" stroke="#e0e0e0" stroke-width="1.3"/></svg>
<div class="t" style="left:1509px;top:354px;color:#e8e8e8">Setup Pose</div>
<div class="t" style="left:1485px;top:373px;color:#c8c8c8">Name</div>
<div class="t" style="left:1666px;top:373px;color:#c8c8c8">Duration</div>
<div class="btn" style="left:1484px;top:390px;width:21px;height:15px;background:#505050"></div><svg style="left:1490px;top:393px" width="9" height="10" viewBox="0 0 9 10"><path d="M0 0L9 5 0 10z" fill="#ececec"/></svg><svg style="left:1510px;top:392px" width="14" height="12" viewBox="0 0 14 12"><circle cx="2" cy="4.5" r="1.6" fill="#6f8ea6"/><circle cx="5.5" cy="6.5" r="1.8" fill="#7fa4bf"/><circle cx="4" cy="10" r="1.7" fill="#6a8aa2"/><circle cx="8" cy="9.5" r="1.4" fill="#5f7f98"/><circle cx="9" cy="5" r="1.4" fill="#8fb4cf"/><circle cx="12.3" cy="2.8" r="1.6" fill="#f4f4f4"/></svg><div class="t" style="left:1525px;top:391px;color:#c8c8c8;transform:scaleX(0.9);transform-origin:0 0">DESPAIR</div><div class="t" style="left:1612px;width:100px;text-align:right;top:391px;color:#c8c8c8;transform:scaleX(1.06);transform-origin:100% 0">3.333s</div><div class="btn" style="left:1484px;top:409px;width:21px;height:15px;background:#505050"></div><svg style="left:1490px;top:412px" width="9" height="10" viewBox="0 0 9 10"><path d="M0 0L9 5 0 10z" fill="#ececec"/></svg><svg style="left:1510px;top:411px" width="14" height="12" viewBox="0 0 14 12"><circle cx="2" cy="4.5" r="1.6" fill="#6f8ea6"/><circle cx="5.5" cy="6.5" r="1.8" fill="#7fa4bf"/><circle cx="4" cy="10" r="1.7" fill="#6a8aa2"/><circle cx="8" cy="9.5" r="1.4" fill="#5f7f98"/><circle cx="9" cy="5" r="1.4" fill="#8fb4cf"/><circle cx="12.3" cy="2.8" r="1.6" fill="#f4f4f4"/></svg><div class="t" style="left:1525px;top:410px;color:#c8c8c8;transform:scaleX(0.9);transform-origin:0 0">HATE</div><div class="t" style="left:1612px;width:100px;text-align:right;top:410px;color:#c8c8c8;transform:scaleX(1.06);transform-origin:100% 0">3.333s</div><div class="btn" style="left:1484px;top:428px;width:21px;height:15px;background:#505050"></div><svg style="left:1490px;top:431px" width="9" height="10" viewBox="0 0 9 10"><path d="M0 0L9 5 0 10z" fill="#ececec"/></svg><svg style="left:1510px;top:430px" width="14" height="12" viewBox="0 0 14 12"><circle cx="2" cy="4.5" r="1.6" fill="#6f8ea6"/><circle cx="5.5" cy="6.5" r="1.8" fill="#7fa4bf"/><circle cx="4" cy="10" r="1.7" fill="#6a8aa2"/><circle cx="8" cy="9.5" r="1.4" fill="#5f7f98"/><circle cx="9" cy="5" r="1.4" fill="#8fb4cf"/><circle cx="12.3" cy="2.8" r="1.6" fill="#f4f4f4"/></svg><div class="t" style="left:1525px;top:428px;color:#c8c8c8;transform:scaleX(0.9);transform-origin:0 0">IDLE</div><div class="t" style="left:1612px;width:100px;text-align:right;top:428px;color:#c8c8c8;transform:scaleX(1.06);transform-origin:100% 0">3.333s</div><div class="btn" style="left:1484px;top:447px;width:21px;height:15px;background:#505050"></div><svg style="left:1490px;top:450px" width="9" height="10" viewBox="0 0 9 10"><path d="M0 0L9 5 0 10z" fill="#ececec"/></svg><svg style="left:1510px;top:449px" width="14" height="12" viewBox="0 0 14 12"><circle cx="2" cy="4.5" r="1.6" fill="#6f8ea6"/><circle cx="5.5" cy="6.5" r="1.8" fill="#7fa4bf"/><circle cx="4" cy="10" r="1.7" fill="#6a8aa2"/><circle cx="8" cy="9.5" r="1.4" fill="#5f7f98"/><circle cx="9" cy="5" r="1.4" fill="#8fb4cf"/><circle cx="12.3" cy="2.8" r="1.6" fill="#f4f4f4"/></svg><div class="t" style="left:1525px;top:447px;color:#c8c8c8;transform:scaleX(0.9);transform-origin:0 0">LAUGH</div><div class="t" style="left:1612px;width:100px;text-align:right;top:447px;color:#c8c8c8;transform:scaleX(1.06);transform-origin:100% 0">3.333s</div><div class="btn" style="left:1484px;top:466px;width:21px;height:15px;background:#505050"></div><svg style="left:1490px;top:469px" width="9" height="10" viewBox="0 0 9 10"><path d="M0 0L9 5 0 10z" fill="#ececec"/></svg><svg style="left:1510px;top:468px" width="14" height="12" viewBox="0 0 14 12"><circle cx="2" cy="4.5" r="1.6" fill="#6f8ea6"/><circle cx="5.5" cy="6.5" r="1.8" fill="#7fa4bf"/><circle cx="4" cy="10" r="1.7" fill="#6a8aa2"/><circle cx="8" cy="9.5" r="1.4" fill="#5f7f98"/><circle cx="9" cy="5" r="1.4" fill="#8fb4cf"/><circle cx="12.3" cy="2.8" r="1.6" fill="#f4f4f4"/></svg><div class="t" style="left:1525px;top:466px;color:#c8c8c8;transform:scaleX(0.9);transform-origin:0 0">NOANI</div><div class="t" style="left:1612px;width:100px;text-align:right;top:466px;color:#c8c8c8;transform:scaleX(1.06);transform-origin:100% 0">1.000s</div><div class="btn" style="left:1484px;top:484px;width:21px;height:15px;background:#505050"></div><svg style="left:1490px;top:487px" width="9" height="10" viewBox="0 0 9 10"><path d="M0 0L9 5 0 10z" fill="#ececec"/></svg><svg style="left:1510px;top:486px" width="14" height="12" viewBox="0 0 14 12"><circle cx="2" cy="4.5" r="1.6" fill="#6f8ea6"/><circle cx="5.5" cy="6.5" r="1.8" fill="#7fa4bf"/><circle cx="4" cy="10" r="1.7" fill="#6a8aa2"/><circle cx="8" cy="9.5" r="1.4" fill="#5f7f98"/><circle cx="9" cy="5" r="1.4" fill="#8fb4cf"/><circle cx="12.3" cy="2.8" r="1.6" fill="#f4f4f4"/></svg><div class="t" style="left:1525px;top:485px;color:#c8c8c8;transform:scaleX(0.9);transform-origin:0 0">PRIDE</div><div class="t" style="left:1612px;width:100px;text-align:right;top:485px;color:#c8c8c8;transform:scaleX(1.06);transform-origin:100% 0">3.333s</div><div class="btn" style="left:1484px;top:503px;width:21px;height:15px;background:#505050"></div><svg style="left:1490px;top:506px" width="9" height="10" viewBox="0 0 9 10"><path d="M0 0L9 5 0 10z" fill="#ececec"/></svg><svg style="left:1510px;top:505px" width="14" height="12" viewBox="0 0 14 12"><circle cx="2" cy="4.5" r="1.6" fill="#6f8ea6"/><circle cx="5.5" cy="6.5" r="1.8" fill="#7fa4bf"/><circle cx="4" cy="10" r="1.7" fill="#6a8aa2"/><circle cx="8" cy="9.5" r="1.4" fill="#5f7f98"/><circle cx="9" cy="5" r="1.4" fill="#8fb4cf"/><circle cx="12.3" cy="2.8" r="1.6" fill="#f4f4f4"/></svg><div class="t" style="left:1525px;top:504px;color:#c8c8c8;transform:scaleX(0.9);transform-origin:0 0">SERIOUS</div><div class="t" style="left:1612px;width:100px;text-align:right;top:504px;color:#c8c8c8;transform:scaleX(1.06);transform-origin:100% 0">3.333s</div><div class="btn" style="left:1484px;top:522px;width:21px;height:15px;background:#505050"></div><svg style="left:1490px;top:525px" width="9" height="10" viewBox="0 0 9 10"><path d="M0 0L9 5 0 10z" fill="#ececec"/></svg><svg style="left:1510px;top:524px" width="14" height="12" viewBox="0 0 14 12"><circle cx="2" cy="4.5" r="1.6" fill="#6f8ea6"/><circle cx="5.5" cy="6.5" r="1.8" fill="#7fa4bf"/><circle cx="4" cy="10" r="1.7" fill="#6a8aa2"/><circle cx="8" cy="9.5" r="1.4" fill="#5f7f98"/><circle cx="9" cy="5" r="1.4" fill="#8fb4cf"/><circle cx="12.3" cy="2.8" r="1.6" fill="#f4f4f4"/></svg><div class="t" style="left:1525px;top:522px;color:#c8c8c8;transform:scaleX(0.9);transform-origin:0 0">SERIOUS2</div><div class="t" style="left:1612px;width:100px;text-align:right;top:522px;color:#c8c8c8;transform:scaleX(1.06);transform-origin:100% 0">3.333s</div><div class="btn" style="left:1484px;top:540px;width:21px;height:15px;background:#505050"></div><svg style="left:1490px;top:543px" width="9" height="10" viewBox="0 0 9 10"><path d="M0 0L9 5 0 10z" fill="#ececec"/></svg><svg style="left:1510px;top:542px" width="14" height="12" viewBox="0 0 14 12"><circle cx="2" cy="4.5" r="1.6" fill="#6f8ea6"/><circle cx="5.5" cy="6.5" r="1.8" fill="#7fa4bf"/><circle cx="4" cy="10" r="1.7" fill="#6a8aa2"/><circle cx="8" cy="9.5" r="1.4" fill="#5f7f98"/><circle cx="9" cy="5" r="1.4" fill="#8fb4cf"/><circle cx="12.3" cy="2.8" r="1.6" fill="#f4f4f4"/></svg><div class="t" style="left:1525px;top:541px;color:#c8c8c8;transform:scaleX(0.9);transform-origin:0 0">SURPRISE</div><div class="t" style="left:1612px;width:100px;text-align:right;top:541px;color:#c8c8c8;transform:scaleX(1.06);transform-origin:100% 0">3.333s</div><div class="btn" style="left:1484px;top:559px;width:21px;height:15px;background:#505050"></div><svg style="left:1490px;top:562px" width="9" height="10" viewBox="0 0 9 10"><path d="M0 0L9 5 0 10z" fill="#ececec"/></svg><svg style="left:1510px;top:561px" width="14" height="12" viewBox="0 0 14 12"><circle cx="2" cy="4.5" r="1.6" fill="#6f8ea6"/><circle cx="5.5" cy="6.5" r="1.8" fill="#7fa4bf"/><circle cx="4" cy="10" r="1.7" fill="#6a8aa2"/><circle cx="8" cy="9.5" r="1.4" fill="#5f7f98"/><circle cx="9" cy="5" r="1.4" fill="#8fb4cf"/><circle cx="12.3" cy="2.8" r="1.6" fill="#f4f4f4"/></svg><div class="t" style="left:1525px;top:560px;color:#c8c8c8;transform:scaleX(0.9);transform-origin:0 0">TOUCH</div><div class="t" style="left:1612px;width:100px;text-align:right;top:560px;color:#c8c8c8;transform:scaleX(1.06);transform-origin:100% 0">8.667s</div>
<div class="btn" style="left:1484px;top:578px;width:233px;height:22px;background:#585858"></div>
<svg style="left:1498px;top:582px" width="12" height="14" viewBox="0 0 12 14"><circle cx="8" cy="1.6" r="1.5" fill="#e0e0e0"/><path d="M7 3.5L4.5 8 7 10 5.5 13.5M4.5 8L1 13M6 4.5L9.5 7 11.5 5.5M6 4.5L3 5.5 2 7.5" fill="none" stroke="#e0e0e0" stroke-width="1.5" stroke-linecap="round"/></svg>
<div class="t" style="left:1514px;top:582px;color:#e8e8e8">Create Animation Reference Assets</div>
<svg style="left:1475px;top:614px" width="7" height="8" viewBox="0 0 7 8"><path d="M0 0L7 4 0 8z" fill="#6a6a6a"/></svg>
<svg style="left:1487px;top:610px" width="12" height="13" viewBox="0 0 12 13"><rect x="0" y="3" width="12" height="10" rx="2" fill="#5c7fb8"/><rect x="2" y="0" width="8" height="6" rx="1" fill="#8fb0e8"/></svg>
<div class="t" style="left:1501px;top:610px;color:#c8c8c8">Slots</div>
<div class="a" style="left:1485px;top:633px;width:418px;height:7px;background:#3e3e3e;border:1px solid #333;border-bottom:none;border-radius:2px 2px 0 0"></div>
<!-- preview bar -->
<div class="a" style="left:1467px;top:640px;width:453px;height:21px;background:#393939;border-top:1px solid #242424;border-bottom:1px solid #2a2a2a"></div>
<div class="t" style="left:1474px;top:646px;color:#dcdcdc;font-weight:bold">Preview</div>
<div class="a" style="left:1521px;top:650px;width:239px;height:1px;background:#555"></div><div class="a" style="left:1521px;top:653px;width:239px;height:1px;background:#555"></div><div class="a" style="left:1760px;top:651px;width:141px;height:2px;background:#5c5c5c"></div>
<div class="a" style="left:1826px;top:647px;width:10px;height:10px;background:#a8a8a8;border-radius:5px"></div>
<svg style="left:1911px;top:646px" width="3" height="11" viewBox="0 0 3 11"><rect x="0.3" y="0.8" width="2.2" height="2.2" fill="#c8c8c8"/><rect x="0.3" y="4.3" width="2.2" height="2.2" fill="#c8c8c8"/><rect x="0.3" y="7.8" width="2.2" height="2.2" fill="#c8c8c8"/></svg>
<!-- preview area -->
<div class="a" style="left:1467px;top:661px;width:453px;height:306px;background:#2e2e2e"></div>
<div class="t" style="left:1477px;top:701px;color:#dcdcdc">Skin</div>
<div class="btn" style="left:1513px;top:702px;width:139px;height:16px;background:#464646"></div>
<svg style="left:1517px;top:704px" width="13" height="12" viewBox="0 0 13 12"><path d="M0 2.5L4 0 6.5 2 9 0 13 2.5 11.5 5.5 10 5V12H3V5L1.5 5.5z" fill="#e8843a"/></svg>
<div class="t" style="left:1531px;top:703px;color:#e0e0e0">default</div>
<svg style="left:1638px;top:708px" width="7" height="5" viewBox="0 0 7 5"><path d="M0 0h7L3.5 4.5z" fill="#c4c4c4"/></svg>
<div class="a" style="left:1667px;top:736px;width:1px;height:40px;background:#666"></div>
<div class="a" style="left:1628px;top:775px;width:40px;height:1px;background:#666"></div>
<svg style="left:1610px;top:725px" width="160" height="190" viewBox="0 0 160 190">
<defs><filter id="sf" x="-10%" y="-10%" width="120%" height="120%"><feGaussianBlur stdDeviation="0.35"/></filter></defs>
<g filter="url(#sf)">
<path d="M55 108Q40 114 32 126Q25 136 25 142" fill="none" stroke="#18161a" stroke-width="1.8"/>
<path d="M23 140q-2 4 1 6q3 1 5-2" fill="none" stroke="#c8a870" stroke-width="1.2"/>
<path d="M58 120L38 150L40 160L64 126z" fill="#a8909a"/>
<path d="M50 136L38 150L40 160L54 140z" fill="#d8c4ca"/>
<path d="M73 30Q80 28 82 40Q84 52 88 60Q98 68 104 80Q108 90 104 98Q98 104 104 110Q114 116 126 120L122 122Q108 118 98 110Q94 104 98 96Q102 88 96 78Q86 68 82 62Q76 48 72 36z" fill="#d898a8"/>
<path d="M84 56Q96 68 101 84Q102 96 99 102Q104 110 118 117" fill="none" stroke="#f0c4d0" stroke-width="1.2"/>
<path d="M101 36L85 72" stroke="#dcd4dc" stroke-width="2.4"/>
<g transform="rotate(-30 119 22)"><path d="M140.0 22.0L137.2 24.1L138.7 26.8L135.0 28.2L135.1 31.0L130.9 31.4L129.5 34.1L125.3 33.6L122.6 35.8L119.0 34.3L115.4 35.8L112.7 33.6L108.5 34.1L107.1 31.4L102.9 31.0L103.0 28.2L99.3 26.8L100.8 24.1L98.0 22.0L100.8 19.9L99.3 17.2L103.0 15.8L102.9 13.0L107.1 12.6L108.5 9.9L112.7 10.4L115.4 8.2L119.0 9.7L122.6 8.2L125.3 10.4L129.5 9.9L130.9 12.6L135.1 13.0L135.0 15.8L138.7 17.2L137.2 19.9z" fill="#e2c4cc"/><ellipse cx="119" cy="22" rx="16.5" ry="10" fill="#f0e4e8"/>
<ellipse cx="108" cy="22" rx="3" ry="2.6" fill="#2a2228"/><ellipse cx="115" cy="16.5" rx="3.2" ry="2.4" fill="#2a2228"/><ellipse cx="124" cy="17" rx="3.2" ry="2.4" fill="#2a2228"/><ellipse cx="113" cy="27" rx="3" ry="2.2" fill="#2a2228"/><ellipse cx="122" cy="27" rx="3" ry="2.2" fill="#2a2228"/><ellipse cx="130" cy="22" rx="2.6" ry="2.2" fill="#2a2228"/></g>
<circle cx="95" cy="46" r="3.6" fill="#f0e0e4"/>
<path d="M53 50Q52 34 63 30Q76 28 78 42Q78 54 74 60Q68 54 62 60Q55 58 53 50z" fill="#d890a4"/>
<ellipse cx="65" cy="49" rx="6.5" ry="7" fill="#f0d6da"/>
<path d="M55 44Q60 34 72 36Q76 42 72 45Q64 40 57 48z" fill="#e0a0b0"/>
<path d="M49 64Q44 72 42 80Q41 86 47 88L54 86L52 80L56 72z" fill="#e2e2ea"/>
<path d="M81 64Q90 68 93 74Q95 80 89 87L83 85L87 77L81 71z" fill="#e2e2ea"/>
<path d="M50 62Q64 58 82 62L83 78Q68 84 54 80z" fill="#ebeaf2"/>
<path d="M63 61l3 5 3-5z" fill="#1c1c34"/>
<path d="M55 79Q68 83 82 79L81 94Q68 98 56 94z" fill="#2a2430"/>
<rect x="71" y="83" width="10" height="11" fill="#c03828"/>
<path d="M51 92L68 92L68 106Q58 108 50 104z" fill="#e6e4ea"/>
<path d="M68 91L83 91L84 107L68 108z" fill="#3a3038"/>
<path d="M54 106L63 106L62 122L55 122z" fill="#d4c4ca"/>
<path d="M63 106Q66 130 62 160L72 160Q74 130 77 107z" fill="#3e303e"/>
<path d="M61 158L73 158L73 176Q71 182 65 182Q60 180 61 172z" fill="#5a4450"/>
<path d="M62 172h11v8q-5 3-11 0z" fill="#e6e2e6"/>
</g></svg>
<!-- asset bundle -->
<div class="a" style="left:1467px;top:967px;width:453px;height:47px;background:#3c3c3c;border-top:1px solid #242424"></div>
<div class="a" style="left:1897px;top:972px;width:17px;height:17px;background:#2f5a99;border-radius:9px"></div>
<svg style="left:1900px;top:975px" width="11" height="11" viewBox="0 0 11 11"><path d="M0.5 0.5h5l5 5-5 5-5-5z" fill="#ffffff"/><circle cx="3" cy="3" r="1" fill="#2f5a99"/></svg>
<div class="t" style="left:1471px;top:994px;color:#c8c8c8">AssetBundle</div>
<div class="btn" style="left:1556px;top:993px;width:271px;height:18px;background:#515151"></div>
<div class="t" style="left:1560px;top:995px;color:#d8d8d8">None</div>
<svg style="left:1814px;top:999px" width="7" height="5" viewBox="0 0 7 5"><path d="M0 0h7L3.5 4.5z" fill="#c4c4c4"/></svg>
<div class="btn" style="left:1832px;top:993px;width:83px;height:18px;background:#515151"></div>
<div class="t" style="left:1836px;top:995px;color:#d8d8d8">None</div>
<svg style="left:1904px;top:999px" width="7" height="5" viewBox="0 0 7 5"><path d="M0 0h7L3.5 4.5z" fill="#c4c4c4"/></svg>

<!-- ===== PROJECT ===== -->
<div class="a" style="left:0;top:628px;width:1466px;height:2px;background:#1c1c1c"></div>
<div class="tabbar" style="left:0;top:630px;width:1466px;height:18px"></div>
<div class="tab" style="left:0;top:630px;width:77px;height:18px;border-radius:0"></div>
<div class="a" style="left:0;top:629px;width:77px;height:2px;background:#3a79bb"></div>
<svg style="left:7px;top:635px" width="11" height="9" viewBox="0 0 11 9"><path d="M0 0h4l1 1.3h6V9H0z" fill="#c8c8c8"/></svg>
<div class="t" style="left:21px;top:633px;color:#c8c8c8">Project</div>
<svg style="left:86px;top:633px" width="10" height="11" viewBox="0 0 10 11"><rect x="0.5" y="0.5" width="9" height="10" fill="none" stroke="#c8c8c8"/><path d="M2 3h6M2 5.5h6M2 8h6" stroke="#c8c8c8"/></svg>
<div class="t" style="left:99px;top:633px;color:#b8b8b8">Console</div>
<svg style="left:1432px;top:632px" width="10" height="11" viewBox="0 0 10 11"><path d="M2.8 1.3H8.1V5.6" fill="none" stroke="#c8c8c8" stroke-width="1.2"/><rect x="1.6" y="5.7" width="7.2" height="4.4" fill="none" stroke="#c8c8c8" stroke-width="1.2"/></svg>
<svg style="left:1451px;top:633px" width="3" height="11" viewBox="0 0 3 11"><rect x="0.3" y="0.8" width="2.2" height="2.2" fill="#c8c8c8"/><rect x="0.3" y="4.3" width="2.2" height="2.2" fill="#c8c8c8"/><rect x="0.3" y="7.8" width="2.2" height="2.2" fill="#c8c8c8"/></svg>
<div class="a" style="left:0;top:648px;width:1466px;height:18px;background:#3c3c3c;border-bottom:1px solid #2f2f2f"></div>
<svg style="left:6px;top:651px" width="12" height="12" viewBox="0 0 12 12"><path d="M6 0.5v11M0.5 6h11" stroke="#c4c4c4" stroke-width="1.3"/></svg>
<svg style="left:22px;top:655px" width="7" height="5" viewBox="0 0 7 5"><path d="M0 0h7L3.5 4.5z" fill="#c4c4c4"/></svg>
<div class="a" style="left:1030px;top:650px;width:300px;height:15px;background:#2a2a2a;border:1px solid #212121;border-radius:3px"></div>
<svg style="left:1034px;top:653px" width="9" height="9" viewBox="0 0 9 9"><circle cx="3.5" cy="3.5" r="2.5" fill="none" stroke="#c8c8c8" stroke-width="1.3"/><path d="M5.5 5.5L8.5 8.5" stroke="#c8c8c8" stroke-width="1.6"/></svg>
<svg style="left:1312px;top:651px" width="12" height="12" viewBox="0 0 12 12"><rect x="3.5" y="0.5" width="8" height="8" fill="none" stroke="#c4c4c4"/><rect x="0.5" y="7.5" width="4" height="4" fill="none" stroke="#c4c4c4"/><path d="M5 6.5L9 2.5M6 2.5h3v3" fill="none" stroke="#c4c4c4"/></svg>
<div class="a" style="left:1331px;top:648px;width:1px;height:18px;background:#2f2f2f"></div>
<svg style="left:1335px;top:651px" width="13" height="13" viewBox="0 0 13 13"><rect x="0" y="0" width="5" height="5" fill="#c8c8c8"/><circle cx="3" cy="9.5" r="3" fill="#c8c8c8"/><path d="M8.5 4L12.5 11H4.5z" fill="#c8c8c8"/></svg>
<div class="a" style="left:1355px;top:648px;width:1px;height:18px;background:#2f2f2f"></div>
<svg style="left:1359px;top:651px" width="12" height="12" viewBox="0 0 12 12"><path d="M6.5 0.5H11.5V5.5L5.5 11.5 0.5 6.5z" fill="#c8c8c8"/><circle cx="9" cy="3" r="1" fill="#3c3c3c"/></svg>
<div class="a" style="left:1379px;top:648px;width:1px;height:18px;background:#2f2f2f"></div>
<svg style="left:1384px;top:651px" width="12" height="12" viewBox="0 0 12 12"><circle cx="6" cy="6" r="6" fill="#d8d8d8"/><rect x="5" y="2.5" width="2" height="4.5" fill="#3c3c3c"/><rect x="5" y="8" width="2" height="1.7" fill="#3c3c3c"/></svg>
<div class="a" style="left:1403px;top:648px;width:1px;height:18px;background:#2f2f2f"></div>
<svg style="left:1408px;top:651px" width="12" height="12" viewBox="0 0 12 12"><path d="M6 0.5l1.7 3.6 3.9.4-2.9 2.6.8 3.9L6 9 2.5 11l.8-3.9L0.4 4.5l3.9-.4z" fill="#8a8a8a"/></svg>
<div class="a" style="left:1428px;top:648px;width:1px;height:18px;background:#2f2f2f"></div>
<svg style="left:1433px;top:654px" width="13" height="8" viewBox="0 0 13 8"><path d="M0.5 4Q6.5 -2 12.5 4Q6.5 10 0.5 4z" fill="#5a5a5a"/><circle cx="6.5" cy="4" r="1.8" fill="#3c3c3c"/></svg>
<div class="t" style="left:1446px;top:651px;color:#b8b8b8">17</div>
<!-- tree -->
<div class="a" style="left:0;top:667px;width:196px;height:347px;background:#383838"></div>
<div class="a" style="left:0;top:667px;width:1px;height:347px;background:#232323"></div>
<svg style="left:5px;top:672px" width="8" height="6" viewBox="0 0 8 6"><path d="M0 0h8L4 6z" fill="#6a6a6a"/></svg>
<svg style="left:18px;top:669px" width="11" height="11" viewBox="0 0 11 11"><path d="M5.5 0.3l1.6 3.4 3.7.4-2.8 2.5.8 3.7L5.5 8.5 2.2 10.3l.8-3.7L0.2 4.1l3.7-.4z" fill="#c8c8c8"/></svg>
<div class="t" style="left:33px;top:668px;color:#dcdcdc;font-weight:bold">Favorites</div>
<svg style="left:30px;top:684px" width="12" height="12" viewBox="0 0 12 12"><circle cx="4.8" cy="4.8" r="3.8" fill="none" stroke="#b0b0b0" stroke-width="1.3"/><path d="M7.5 7.5L11.2 11.2" stroke="#b0b0b0" stroke-width="1.6"/></svg><div class="t" style="left:45px;top:683px;color:#c8c8c8">Lang</div><svg style="left:30px;top:699px" width="12" height="12" viewBox="0 0 12 12"><circle cx="4.8" cy="4.8" r="3.8" fill="none" stroke="#b0b0b0" stroke-width="1.3"/><path d="M7.5 7.5L11.2 11.2" stroke="#b0b0b0" stroke-width="1.6"/></svg><div class="t" style="left:45px;top:698px;color:#c8c8c8">gameselect</div><svg style="left:30px;top:714px" width="12" height="12" viewBox="0 0 12 12"><circle cx="4.8" cy="4.8" r="3.8" fill="none" stroke="#b0b0b0" stroke-width="1.3"/><path d="M7.5 7.5L11.2 11.2" stroke="#b0b0b0" stroke-width="1.6"/></svg><div class="t" style="left:45px;top:713px;color:#c8c8c8">Lobby</div><svg style="left:30px;top:729px" width="12" height="12" viewBox="0 0 12 12"><circle cx="4.8" cy="4.8" r="3.8" fill="none" stroke="#b0b0b0" stroke-width="1.3"/><path d="M7.5 7.5L11.2 11.2" stroke="#b0b0b0" stroke-width="1.6"/></svg><div class="t" style="left:45px;top:728px;color:#c8c8c8">TestMulti</div><svg style="left:30px;top:744px" width="12" height="12" viewBox="0 0 12 12"><circle cx="4.8" cy="4.8" r="3.8" fill="none" stroke="#b0b0b0" stroke-width="1.3"/><path d="M7.5 7.5L11.2 11.2" stroke="#b0b0b0" stroke-width="1.6"/></svg><div class="t" style="left:45px;top:743px;color:#c8c8c8">All Modified</div><svg style="left:30px;top:759px" width="12" height="12" viewBox="0 0 12 12"><circle cx="4.8" cy="4.8" r="3.8" fill="none" stroke="#b0b0b0" stroke-width="1.3"/><path d="M7.5 7.5L11.2 11.2" stroke="#b0b0b0" stroke-width="1.6"/></svg><div class="t" style="left:45px;top:758px;color:#c8c8c8">All Conflicts</div><svg style="left:30px;top:774px" width="12" height="12" viewBox="0 0 12 12"><circle cx="4.8" cy="4.8" r="3.8" fill="none" stroke="#b0b0b0" stroke-width="1.3"/><path d="M7.5 7.5L11.2 11.2" stroke="#b0b0b0" stroke-width="1.6"/></svg><div class="t" style="left:45px;top:773px;color:#c8c8c8">All Excluded</div><svg style="left:30px;top:789px" width="12" height="12" viewBox="0 0 12 12"><circle cx="4.8" cy="4.8" r="3.8" fill="none" stroke="#b0b0b0" stroke-width="1.3"/><path d="M7.5 7.5L11.2 11.2" stroke="#b0b0b0" stroke-width="1.6"/></svg><div class="t" style="left:45px;top:788px;color:#c8c8c8">All Materials</div><svg style="left:30px;top:804px" width="12" height="12" viewBox="0 0 12 12"><circle cx="4.8" cy="4.8" r="3.8" fill="none" stroke="#b0b0b0" stroke-width="1.3"/><path d="M7.5 7.5L11.2 11.2" stroke="#b0b0b0" stroke-width="1.6"/></svg><div class="t" style="left:45px;top:803px;color:#c8c8c8">All Models</div><svg style="left:30px;top:819px" width="12" height="12" viewBox="0 0 12 12"><circle cx="4.8" cy="4.8" r="3.8" fill="none" stroke="#b0b0b0" stroke-width="1.3"/><path d="M7.5 7.5L11.2 11.2" stroke="#b0b0b0" stroke-width="1.6"/></svg><div class="t" style="left:45px;top:818px;color:#c8c8c8">All Prefabs</div><svg style="left:30px;top:864px" width="12" height="10" viewBox="0 0 12 10"><path d="M0 0.5h4.5l1.2 1.5H12V10H0z" fill="#c4c4c4"/></svg><div class="t" style="left:45px;top:862px;color:#c8c8c8">SAW</div><svg style="left:30px;top:879px" width="12" height="10" viewBox="0 0 12 10"><path d="M0 0.5h4.5l1.2 1.5H12V10H0z" fill="#c4c4c4"/></svg><div class="t" style="left:45px;top:877px;color:#c8c8c8">Scenes</div><svg style="left:19px;top:895px" width="6" height="8" viewBox="0 0 6 8"><path d="M0 0L6 4 0 8z" fill="#6a6a6a"/></svg><svg style="left:30px;top:894px" width="12" height="10" viewBox="0 0 12 10"><path d="M0 0.5h4.5l1.2 1.5H12V10H0z" fill="#c4c4c4"/></svg><div class="t" style="left:45px;top:892px;color:#c8c8c8">Spine</div><svg style="left:19px;top:910px" width="6" height="8" viewBox="0 0 6 8"><path d="M0 0L6 4 0 8z" fill="#6a6a6a"/></svg><svg style="left:30px;top:909px" width="12" height="10" viewBox="0 0 12 10"><path d="M0 0.5h4.5l1.2 1.5H12V10H0z" fill="#c4c4c4"/></svg><div class="t" style="left:45px;top:907px;color:#c8c8c8">Spine Examples</div><svg style="left:19px;top:940px" width="6" height="8" viewBox="0 0 6 8"><path d="M0 0L6 4 0 8z" fill="#6a6a6a"/></svg><svg style="left:30px;top:939px" width="12" height="10" viewBox="0 0 12 10"><path d="M0 0.5h4.5l1.2 1.5H12V10H0z" fill="#c4c4c4"/></svg><div class="t" style="left:45px;top:937px;color:#c8c8c8">Code Coverage</div><svg style="left:19px;top:955px" width="6" height="8" viewBox="0 0 6 8"><path d="M0 0L6 4 0 8z" fill="#6a6a6a"/></svg><svg style="left:30px;top:954px" width="12" height="10" viewBox="0 0 12 10"><path d="M0 0.5h4.5l1.2 1.5H12V10H0z" fill="#c4c4c4"/></svg><div class="t" style="left:45px;top:952px;color:#c8c8c8">Custom NUnit</div><svg style="left:19px;top:970px" width="6" height="8" viewBox="0 0 6 8"><path d="M0 0L6 4 0 8z" fill="#6a6a6a"/></svg><svg style="left:30px;top:969px" width="12" height="10" viewBox="0 0 12 10"><path d="M0 0.5h4.5l1.2 1.5H12V10H0z" fill="#c4c4c4"/></svg><div class="t" style="left:45px;top:967px;color:#c8c8c8">Editor Coroutines</div><svg style="left:19px;top:985px" width="6" height="8" viewBox="0 0 6 8"><path d="M0 0L6 4 0 8z" fill="#6a6a6a"/></svg><svg style="left:30px;top:984px" width="12" height="10" viewBox="0 0 12 10"><path d="M0 0.5h4.5l1.2 1.5H12V10H0z" fill="#c4c4c4"/></svg><div class="t" style="left:45px;top:982px;color:#c8c8c8">JetBrains Rider Editor</div><svg style="left:19px;top:1000px" width="6" height="8" viewBox="0 0 6 8"><path d="M0 0L6 4 0 8z" fill="#6a6a6a"/></svg><svg style="left:30px;top:999px" width="12" height="10" viewBox="0 0 12 10"><path d="M0 0.5h4.5l1.2 1.5H12V10H0z" fill="#c4c4c4"/></svg><div class="t" style="left:45px;top:997px;color:#c8c8c8">Profile Analyzer</div>
<svg style="left:5px;top:851px" width="8" height="6" viewBox="0 0 8 6"><path d="M0 0h8L4 6z" fill="#6a6a6a"/></svg>
<svg style="left:18px;top:849px" width="13" height="10" viewBox="0 0 13 10"><path d="M0 0.5h4.5l1.2 1.5H11V4H3L0 10z" fill="#c4c4c4"/><path d="M3.2 4.5H13L10.5 10H0.6z" fill="#c4c4c4"/></svg>
<div class="t" style="left:33px;top:847px;color:#dcdcdc;font-weight:bold">Assets</div>
<div class="a" style="left:1px;top:861px;width:181px;height:15px;background:#4a4a4a"></div>
<svg style="left:30px;top:864px" width="12" height="10" viewBox="0 0 12 10"><path d="M0 0.5h4.5l1.2 1.5H12V10H0z" fill="#c4c4c4"/></svg>
<div class="t" style="left:45px;top:862px;color:#d8d8d8">SAW</div>
<svg style="left:5px;top:926px" width="8" height="6" viewBox="0 0 8 6"><path d="M0 0h8L4 6z" fill="#6a6a6a"/></svg>
<svg style="left:18px;top:924px" width="13" height="10" viewBox="0 0 13 10"><path d="M0 0.5h4.5l1.2 1.5H11V4H3L0 10z" fill="#c4c4c4"/><path d="M3.2 4.5H13L10.5 10H0.6z" fill="#c4c4c4"/></svg>
<div class="t" style="left:33px;top:922px;color:#dcdcdc;font-weight:bold">Packages</div>
<div class="a" style="left:184px;top:667px;width:10px;height:347px;background:#3a3a3a"></div>
<svg style="left:185px;top:673px" width="8" height="5" viewBox="0 0 8 5"><path d="M0 5L4 0 8 5z" fill="#c4c4c4"/></svg>
<div class="a" style="left:185px;top:683px;width:8px;height:214px;background:#5e5e5e;border-radius:4px"></div>
<svg style="left:185px;top:1004px" width="8" height="5" viewBox="0 0 8 5"><path d="M0 0L8 0 4 5z" fill="#c4c4c4"/></svg>
<div class="a" style="left:194px;top:667px;width:2px;height:347px;background:#242424"></div>
<!-- assets grid -->
<div class="a" style="left:196px;top:667px;width:1270px;height:347px;background:#333333"></div>
<div class="a" style="left:196px;top:667px;width:1270px;height:19px;background:#3c3c3c;border-bottom:1px solid #2c2c2c"></div>
<div class="t" style="left:199px;top:670px;color:#b0b0b0">Assets</div>
<svg style="left:240px;top:672px" width="6" height="9" viewBox="0 0 6 9"><path d="M0.5 0.5L5 4.5 0.5 8.5" fill="none" stroke="#9a9a9a" stroke-width="1.1"/></svg>
<div class="t" style="left:252px;top:670px;color:#dcdcdc;font-weight:bold">SAW</div>
<svg style="left:212px;top:699px" width="60" height="60" viewBox="0 0 60 60"><rect width="60" height="60" fill="#0a080a"/>
<rect x="0" y="0.5" width="8" height="3" fill="#f0f0f0"/>
<path d="M3 5h4v50l-2 4-2-4z" fill="#b8b0b4"/>
<path d="M9 4h13v28H9z" fill="#5a4048"/>
<path d="M11 6Q16 3 21 8V28Q16 32 11 28z" fill="#8a6a72"/>
<path d="M15 1h12v4l-3 13H15z" fill="#d0d0dc"/>
<path d="M18 18h8v10h-8z" fill="#a8a4b0"/>
<path d="M14 34Q20 32 22 40Q16 44 22 48Q26 54 18 58L14 56Q20 52 14 48Q10 42 16 40z" fill="#d89aaa"/>
<rect x="22" y="4" width="3" height="20" fill="#c8c4cc"/>
<rect x="27" y="2" width="4" height="10" fill="#e0dce4"/>
<rect x="33" y="2" width="5" height="6" fill="#d8d4dc"/>
<rect x="39" y="3" width="3" height="22" fill="#d0c8d0"/>
<rect x="43" y="2" width="6" height="8" fill="#c8b8c0"/>
<rect x="50" y="3" width="3" height="18" fill="#e8e0e8"/>
<rect x="54" y="2" width="5" height="10" fill="#b8a8b0"/>
<rect x="30" y="12" width="8" height="12" fill="#9a98a8"/>
<rect x="44" y="12" width="5" height="14" fill="#f0f0f4"/>
<path d="M31 22h9v16h-9z" fill="#e0e0ea"/>
<ellipse cx="43" cy="32" rx="5" ry="5.5" fill="#d87a90"/>
<path d="M48 28Q54 26 59 30V42Q54 44 48 40z" fill="#e0a8b4"/>
<rect x="48" y="33" width="11" height="4" fill="#f0f0f0"/>
<path d="M22 36h7v24h-7z" fill="#2a2228"/>
<path d="M24 34Q28 32 30 38L26 42z" fill="#d8c8b8"/>
<path d="M34 40h10v8H34z" fill="#1a1418"/>
<rect x="42" y="38" width="3" height="10" fill="#e8e8ee"/>
<circle cx="37" cy="54" r="7" fill="#e2d6dc"/>
<circle cx="35" cy="52" r="1.3" fill="#201820"/><circle cx="39.5" cy="52" r="1.3" fill="#201820"/><circle cx="34" cy="56" r="1.3" fill="#201820"/><circle cx="38" cy="57" r="1.3" fill="#201820"/>
<circle cx="51" cy="46" r="5" fill="#f0d4cc"/>
<path d="M47 51h10v9H47z" fill="#c8b8d4"/>
<rect x="55" y="42" width="4" height="12" fill="#c04050"/></svg>
<svg style="left:294px;top:700px" width="48" height="57" viewBox="0 0 48 57"><path d="M4 0H35L48 12V53a4 4 0 0 1-4 4H4a4 4 0 0 1-4-4V4a4 4 0 0 1 4-4z" fill="#ececec"/><path d="M9 23.5H39M9 31.5H39M9 39.5H28" stroke="#7a7a7a" stroke-width="3.4" stroke-linecap="round"/></svg>
<svg style="left:370px;top:700px" width="48" height="57" viewBox="0 0 48 57"><path d="M4 0H35L48 12V53a4 4 0 0 1-4 4H4a4 4 0 0 1-4-4V4a4 4 0 0 1 4-4z" fill="#ececec"/><path d="M9 23.5H39M9 31.5H39M9 39.5H28" stroke="#7a7a7a" stroke-width="3.4" stroke-linecap="round"/></svg>
<div class="a" style="left:464px;top:721px;width:11px;height:13px;background:#5a9a6a;border:1px solid #3a6a4a"></div>
<div class="a" style="left:515px;top:699px;width:61px;height:60px;background:#4a4a4a"></div>
<svg style="left:522px;top:705px;opacity:0.92" width="46" height="47" viewBox="0 0 60 60"><rect width="60" height="60" fill="#3a3638"/>
<rect x="0" y="0.5" width="8" height="3" fill="#f0f0f0"/>
<path d="M3 5h4v50l-2 4-2-4z" fill="#b8b0b4"/>
<path d="M9 4h13v28H9z" fill="#5a4048"/>
<path d="M11 6Q16 3 21 8V28Q16 32 11 28z" fill="#8a6a72"/>
<path d="M15 1h12v4l-3 13H15z" fill="#d0d0dc"/>
<path d="M18 18h8v10h-8z" fill="#a8a4b0"/>
<path d="M14 34Q20 32 22 40Q16 44 22 48Q26 54 18 58L14 56Q20 52 14 48Q10 42 16 40z" fill="#d89aaa"/>
<rect x="22" y="4" width="3" height="20" fill="#c8c4cc"/>
<rect x="27" y="2" width="4" height="10" fill="#e0dce4"/>
<rect x="33" y="2" width="5" height="6" fill="#d8d4dc"/>
<rect x="39" y="3" width="3" height="22" fill="#d0c8d0"/>
<rect x="43" y="2" width="6" height="8" fill="#c8b8c0"/>
<rect x="50" y="3" width="3" height="18" fill="#e8e0e8"/>
<rect x="54" y="2" width="5" height="10" fill="#b8a8b0"/>
<rect x="30" y="12" width="8" height="12" fill="#9a98a8"/>
<rect x="44" y="12" width="5" height="14" fill="#f0f0f4"/>
<path d="M31 22h9v16h-9z" fill="#e0e0ea"/>
<ellipse cx="43" cy="32" rx="5" ry="5.5" fill="#d87a90"/>
<path d="M48 28Q54 26 59 30V42Q54 44 48 40z" fill="#e0a8b4"/>
<rect x="48" y="33" width="11" height="4" fill="#f0f0f0"/>
<path d="M22 36h7v24h-7z" fill="#2a2228"/>
<path d="M24 34Q28 32 30 38L26 42z" fill="#d8c8b8"/>
<path d="M34 40h10v8H34z" fill="#1a1418"/>
<rect x="42" y="38" width="3" height="10" fill="#e8e8ee"/>
<circle cx="37" cy="54" r="7" fill="#e2d6dc"/>
<circle cx="35" cy="52" r="1.3" fill="#201820"/><circle cx="39.5" cy="52" r="1.3" fill="#201820"/><circle cx="34" cy="56" r="1.3" fill="#201820"/><circle cx="38" cy="57" r="1.3" fill="#201820"/>
<circle cx="51" cy="46" r="5" fill="#f0d4cc"/>
<path d="M47 51h10v9H47z" fill="#c8b8d4"/>
<rect x="55" y="42" width="4" height="12" fill="#c04050"/></svg>
<div class="a" style="left:591px;top:699px;width:61px;height:60px;background:#4a4f58"></div>
<svg style="left:591px;top:699px" width="61" height="60" viewBox="0 0 61 60">
<g transform="rotate(-35 44 14)"><ellipse cx="44" cy="14" rx="8" ry="5" fill="#e8dce4"/><circle cx="41" cy="14" r="1.2" fill="#4a4f58"/><circle cx="45" cy="12" r="1.2" fill="#4a4f58"/><circle cx="47" cy="16" r="1.2" fill="#4a4f58"/></g>
<path d="M40 20L30 38" stroke="#d8d0d8" stroke-width="1.6"/>
<path d="M26 18Q32 14 36 20Q36 28 32 30Q28 28 24 26z" fill="#c890a8"/>
<path d="M20 28Q28 24 34 30L32 36Q26 38 20 34z" fill="#e0e0ea"/>
<path d="M34 26Q40 34 38 40Q44 48 46 44" fill="none" stroke="#c890a8" stroke-width="2"/>
<path d="M24 36h10v10H24z" fill="#6a4a58"/>
<path d="M26 46L25 56M30 46L31 58" stroke="#5a4858" stroke-width="3"/>
<path d="M22 46L17 58" stroke="#a898a8" stroke-width="1.5"/>
</svg>
<div class="a" style="left:583px;top:763px;width:76px;height:13px;background:#2b5f8e;border-radius:3px"></div>
<div class="t" style="left:210px;top:763px;color:#c8c8c8;font-size:10px;transform:scaleX(0.95);transform-origin:0 0">UNIT_ILLUS...</div>
<div class="t" style="left:286px;top:763px;color:#c8c8c8;font-size:10px;transform:scaleX(0.95);transform-origin:0 0">UNIT_ILLUS...</div>
<div class="t" style="left:362px;top:763px;color:#c8c8c8;font-size:10px;transform:scaleX(0.95);transform-origin:0 0">UNIT_ILLUS...</div>
<div class="t" style="left:438px;top:763px;color:#c8c8c8;font-size:10px;transform:scaleX(0.95);transform-origin:0 0">UNIT_ILLUS...</div>
<div class="a" style="left:511px;top:767px;width:5px;height:5px;background:#7ab0e0;border-radius:3px"></div>
<div class="t" style="left:519px;top:763px;color:#c8c8c8;font-size:10px;transform:scaleX(0.95);transform-origin:0 0">UNIT_ILLUS...</div>
<div class="a" style="left:587px;top:767px;width:6px;height:6px;background:#c07060"></div>
<div class="t" style="left:595px;top:763px;color:#f0f0f0;font-size:10px;transform:scaleX(0.95);transform-origin:0 0">UNIT_ILLUS...</div>
<!-- footer -->
<div class="a" style="left:196px;top:995px;width:1270px;height:19px;background:#3c3c3c;border-top:1px solid #2c2c2c"></div>
<div class="a" style="left:201px;top:998px;width:10px;height:12px;background:linear-gradient(to right,#7a8090 0 40%,#c05a40 40% 70%,#7a8090 70%);border-radius:1px"></div>
<div class="t" style="left:214px;top:998px;color:#c8c8c8;transform:scaleX(0.946);transform-origin:0 0">Assets/SAW/UNIT_ILLUST_REAPER_C_SAW_SkeletonData.asset</div>
<div class="a" style="left:1400px;top:1004px;width:50px;height:2px;background:#5a5a5a"></div>
<div class="a" style="left:1426px;top:999px;width:10px;height:10px;background:#9a9a9a;border-radius:5px"></div>

<!-- ===== STATUS ===== -->
<div class="a" style="left:0;top:1014px;width:1920px;height:21px;background:#191919"></div>
<svg style="left:1826px;top:1018px" width="13" height="13" viewBox="0 0 13 13"><ellipse cx="6.5" cy="7.5" rx="3.5" ry="4.5" fill="#b0b0b0"/><path d="M1 4l3 2M12 4L9 6M0.5 8h3M12.5 8h-3M1 12l3-2M12 12l-3-2M0.5 0.5L12.5 12.5" stroke="#b0b0b0" stroke-width="1.1"/></svg>
<svg style="left:1850px;top:1018px" width="13" height="13" viewBox="0 0 13 13"><ellipse cx="6.5" cy="2.5" rx="5" ry="2" fill="#b0b0b0"/><path d="M1.5 5.5a5 2 0 0 0 10 0M1.5 8.5a5 2 0 0 0 10 0M0.5 0.5L12.5 12.5" fill="none" stroke="#b0b0b0" stroke-width="1.3"/></svg>
<svg style="left:1875px;top:1018px" width="13" height="13" viewBox="0 0 13 13"><circle cx="6.5" cy="6.5" r="4.5" fill="none" stroke="#b0b0b0" stroke-width="1.3"/><path d="M6.5 0v13M0 6.5h13M0.5 0.5L12.5 12.5" stroke="#b0b0b0" stroke-width="1.1"/></svg>
<svg style="left:1899px;top:1018px" width="13" height="13" viewBox="0 0 13 13"><circle cx="6.5" cy="6.5" r="5.8" fill="none" stroke="#b0b0b0" stroke-width="1.2"/><path d="M3.8 6.8l2 2 3.6-4" fill="none" stroke="#b0b0b0" stroke-width="1.2"/></svg>
<div class="a" style="left:0;top:0;width:1px;height:1035px;background:#0c0c0c"></div>
</body></html>
